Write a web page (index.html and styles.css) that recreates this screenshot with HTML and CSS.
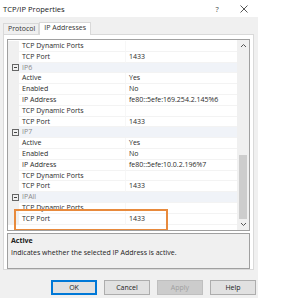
FILE: index.html
```html
<!DOCTYPE html>
<html>
<head>
<meta charset="utf-8">
<link rel="stylesheet" href="styles.css">
</head>
<body>
<div class="dialog">
  <div class="titlebar">
    <span class="title">TCP/IP Properties</span>
    <span class="help">?</span>
    <span class="close"><svg width="8" height="8" viewBox="0 0 8 8"><path d="M0.5 0.5L7.5 7.5M7.5 0.5L0.5 7.5" stroke="#444" stroke-width="0.9" fill="none"/></svg></span>
  </div>
  <div class="body">
    <div class="tabs">
      <div class="tab">Protocol</div>
      <div class="tab active">IP Addresses</div>
    </div>
    <div class="panel">
      <div class="grid">
        <div class="rows">
          <div class="row"><span class="gut"></span><span class="name">TCP Dynamic Ports</span><span class="val"></span></div>
          <div class="row"><span class="gut"></span><span class="name">TCP Port</span><span class="val">1433</span></div>
          <div class="row cat"><span class="gut"><i class="box"></i></span><span class="name">IP6</span><span class="val"></span></div>
          <div class="row"><span class="gut"></span><span class="name">Active</span><span class="val">Yes</span></div>
          <div class="row"><span class="gut"></span><span class="name">Enabled</span><span class="val">No</span></div>
          <div class="row"><span class="gut"></span><span class="name">IP Address</span><span class="val">fe80::5efe:169.254.2.145%6</span></div>
          <div class="row"><span class="gut"></span><span class="name">TCP Dynamic Ports</span><span class="val"></span></div>
          <div class="row"><span class="gut"></span><span class="name">TCP Port</span><span class="val">1433</span></div>
          <div class="row cat"><span class="gut"><i class="box"></i></span><span class="name">IP7</span><span class="val"></span></div>
          <div class="row"><span class="gut"></span><span class="name">Active</span><span class="val">Yes</span></div>
          <div class="row"><span class="gut"></span><span class="name">Enabled</span><span class="val">No</span></div>
          <div class="row"><span class="gut"></span><span class="name">IP Address</span><span class="val">fe80::5efe:10.0.2.196%7</span></div>
          <div class="row"><span class="gut"></span><span class="name">TCP Dynamic Ports</span><span class="val"></span></div>
          <div class="row"><span class="gut"></span><span class="name">TCP Port</span><span class="val">1433</span></div>
          <div class="row cat"><span class="gut"><i class="box"></i></span><span class="name">IPAll</span><span class="val"></span></div>
          <div class="row"><span class="gut"></span><span class="name">TCP Dynamic Ports</span><span class="val"></span></div>
          <div class="row hl"><span class="gut"></span><span class="name">TCP Port</span><span class="val">1433</span></div>
        </div>
        <div class="scrollbar">
          <div class="arrow"><svg width="7" height="5" viewBox="0 0 7 5"><path d="M1 4L3.5 1.5L6 4" stroke="#555" stroke-width="1" fill="none"/></svg></div>
          <div class="track"><div class="thumb"></div></div>
          <div class="arrow"><svg width="7" height="5" viewBox="0 0 7 5"><path d="M1 1L3.5 3.5L6 1" stroke="#555" stroke-width="1" fill="none"/></svg></div>
        </div>
      </div>
      <div class="desc">
        <div class="desc-title">Active</div>
        <div class="desc-text">Indicates whether the selected IP Address is active.</div>
      </div>
    </div>
    <div class="buttons">
      <button class="btn default">OK</button>
      <button class="btn">Cancel</button>
      <button class="btn disabled">Apply</button>
      <button class="btn">Help</button>
    </div>
  </div>
</div>
</body>
</html>
```
FILE: styles.css
```css
* { box-sizing: border-box; }
html, body { margin: 0; padding: 0; background: #fff; }
body {
  width: 300px;
  height: 298px;
  overflow: hidden;
  font-family: "Open Sans", "Noto Sans", sans-serif;
  color: #222;
}
.dialog {
  width: 258px;
  height: 298px;
  display: flex;
  flex-direction: column;
}
.titlebar {
  height: 17px;
  background: #fff;
  display: flex;
  align-items: center;
  padding-left: 3px;
  font-size: 7.6px;
}
.title { flex: 1; color: #222; }
.help { width: 10px; margin-right: 18px; text-align: center; color: #444; font-size: 7.5px; }
.close { width: 10px; margin-right: 8px; display: flex; align-items: center; }
.body {
  flex: 1;
  background: #f0f0f0;
  padding: 5px 4px 0 3px;
  display: flex;
  flex-direction: column;
}
.tabs {
  display: flex;
  align-items: flex-end;
  height: 12px;
  font-size: 7px;
  position: relative;
  z-index: 1;
}
.tab {
  height: 11px;
  padding: 0 3px 0 4px;
  border: 1px solid #d9d9d9;
  border-bottom: none;
  background: #f0f0f0;
  line-height: 10px;
  color: #333;
}
.tab.active {
  height: 13px;
  background: #fff;
  border-color: #d9d9d9;
  padding: 0 4px;
  margin-bottom: -1px;
}
.panel {
  border: 1px solid #d9d9d9;
  background: #fff;
  padding: 4px 3px 0 3px;
  height: 236px;
  display: flex;
  flex-direction: column;
}
.grid {
  height: 194px;
  border: 1px solid #a0a0a0;
  display: flex;
  background: #fff;
  overflow: hidden;
}
.rows {
  flex: 1;
  padding-top: 1px;
}
.row {
  display: flex;
  height: 10.8px;
  font-size: 7px;
  line-height: 10px;
  color: #2a2a2a;
}
.gut {
  width: 11px;
  background: #f0f0f0;
  display: flex;
  align-items: center;
  justify-content: center;
}
.name {
  width: 107px;
  padding-left: 3px;
  border-bottom: 1px solid #f3f3f3;
  border-right: 1px solid #f7f7f7;
  white-space: nowrap;
}
.val {
  flex: 1;
  padding-left: 3px;
  border-bottom: 1px solid #f3f3f3;
  white-space: nowrap;
}
.row.cat .name, .row.cat .val {
  background: #f0f3f8;
  color: #8a8a8a;
  border-right: none;
}
.box {
  display: block;
  width: 7px;
  height: 7px;
  border: 1px solid #666;
  position: relative;
  margin-left: 3px;
}
.box::after {
  content: "";
  position: absolute;
  left: 1px;
  right: 1px;
  top: 2px;
  height: 1px;
  background: #444;
}
.row.hl { position: relative; }
.row.hl::after {
  content: "";
  position: absolute;
  left: 6px;
  top: -5px;
  width: 150px;
  height: 18px;
  border: 2px solid #e88a3c;
}
.scrollbar {
  width: 12px;
  background: #f0f0f0;
  display: flex;
  flex-direction: column;
}
.arrow {
  height: 11px;
  display: flex;
  align-items: center;
  justify-content: center;
}
.track { flex: 1; position: relative; }
.thumb {
  position: absolute;
  left: 2px;
  right: 2px;
  top: 104px;
  bottom: 0;
  background: #cdcdcd;
}
.desc {
  margin-top: 2px;
  height: 36px;
  border: 1px solid #a0a0a0;
  background: #f0f0f0;
  padding: 2px 3px;
  font-size: 7px;
  line-height: 10px;
}
.desc-title { font-weight: bold; }
.desc-text { margin-top: 2px; }
.buttons {
  display: flex;
  justify-content: flex-end;
  gap: 7px;
  padding-top: 10px;
  margin-right: -2px;
}
.btn {
  width: 46px;
  height: 15px;
  font-family: inherit;
  font-size: 7px;
  background: #e1e1e1;
  border: 1px solid #adadad;
  color: #222;
  padding: 0;
}
.btn.default { border: 1px solid #0078d7; box-shadow: inset 0 0 0 1px #0078d7; }
.btn.disabled { color: #a0a0a0; background: #ccc; border-color: #bfbfbf; }
```
